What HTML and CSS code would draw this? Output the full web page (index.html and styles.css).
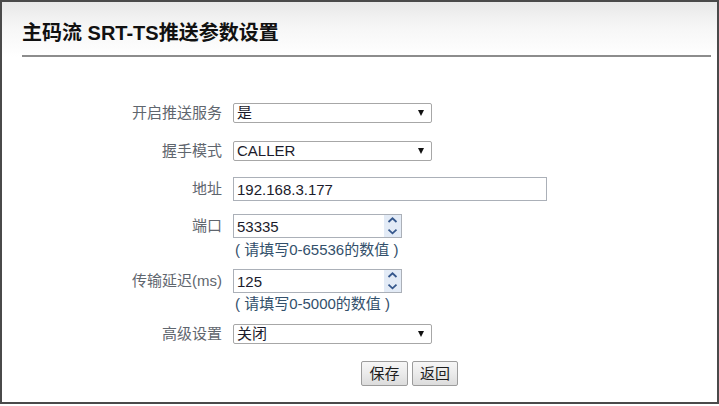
FILE: index.html
```html
<!DOCTYPE html>
<html lang="zh-CN">
<head>
<meta charset="utf-8">
<title>主码流 SRT-TS推送参数设置</title>
<link rel="stylesheet" href="styles.css">
</head>
<body>
<div class="frame">
  <div class="head">
    <h2 class="title">主码流 SRT-TS推送参数设置</h2>
  </div>
  <form class="form">
    <div class="row row-1">
      <label class="lbl lbl-sel">开启推送服务</label>
      <div class="field">
        <div class="sel-wrap">
          <select class="sel"><option>是</option><option>否</option></select>
          <i class="caret"></i>
        </div>
      </div>
    </div>
    <div class="row row-2">
      <label class="lbl lbl-sel">握手模式</label>
      <div class="field">
        <div class="sel-wrap">
          <select class="sel"><option>CALLER</option><option>LISTENER</option></select>
          <i class="caret"></i>
        </div>
      </div>
    </div>
    <div class="row row-3">
      <label class="lbl lbl-inp">地址</label>
      <div class="field">
        <input class="inp inp-wide" type="text" value="192.168.3.177">
      </div>
    </div>
    <div class="row row-4">
      <label class="lbl lbl-inp">端口</label>
      <div class="field">
        <div class="num">
          <input class="num-inp" type="text" value="53335">
          <span class="spin">
            <svg width="17" height="22" viewBox="0 0 17 22"><polyline points="4.5,7 8.5,3.3 12.5,7" fill="none" stroke="#35578c" stroke-width="1.8"/><polyline points="4.5,14.6 8.5,18.3 12.5,14.6" fill="none" stroke="#35578c" stroke-width="1.8"/></svg>
          </span>
        </div>
        <div class="hint hint-1">( 请填写0-65536的数值 )</div>
      </div>
    </div>
    <div class="row row-5">
      <label class="lbl lbl-inp">传输延迟(ms)</label>
      <div class="field">
        <div class="num">
          <input class="num-inp" type="text" value="125">
          <span class="spin">
            <svg width="17" height="22" viewBox="0 0 17 22"><polyline points="4.5,7 8.5,3.3 12.5,7" fill="none" stroke="#35578c" stroke-width="1.8"/><polyline points="4.5,14.6 8.5,18.3 12.5,14.6" fill="none" stroke="#35578c" stroke-width="1.8"/></svg>
          </span>
        </div>
        <div class="hint hint-2">( 请填写0-5000的数值 )</div>
      </div>
    </div>
    <div class="row row-6">
      <label class="lbl lbl-sel">高级设置</label>
      <div class="field">
        <div class="sel-wrap">
          <select class="sel"><option>关闭</option><option>开启</option></select>
          <i class="caret"></i>
        </div>
      </div>
    </div>
    <div class="actions">
      <button class="btn btn-save" type="button">保存</button>
      <button class="btn btn-back" type="button">返回</button>
    </div>
  </form>
</div>
</body>
</html>
```
FILE: styles.css
```css
html, body {
  margin: 0;
  padding: 0;
  background: #ffffff;
}

body {
  font-family: "Liberation Sans", "Noto Sans CJK SC", sans-serif;
  font-size: 15px;
  color: #222;
}

.frame {
  width: 719px;
  height: 404px;
  box-sizing: border-box;
  border: 2px solid #4a4a4a;
  background: #ffffff;
  overflow: hidden;
}

.head {
  background: linear-gradient(to bottom, #e8e8e8 0%, #f6f6f6 45%, #ffffff 100%);
  padding: 0 6px 0 20px;
}

.title {
  margin: 0;
  padding: 19px 0 10px 0;
  font-size: 20px;
  line-height: 24px;
  font-weight: bold;
  color: #111;
  border-bottom: 2px solid #8c8c8c;
}

.form {
  margin: 0;
  padding-top: 46px;
}

.row {
  display: flex;
  align-items: flex-start;
}

.row-2 { margin-top: 18px; }
.row-3 { margin-top: 16px; }
.row-4 { margin-top: 13px; }
.row-5 { margin-top: 9px; }
.row-6 { margin-top: 10px; }

.lbl {
  width: 220px;
  flex: none;
  text-align: right;
  color: #5f666e;
  font-size: 15px;
  white-space: nowrap;
}

.lbl-sel {
  height: 20px;
  line-height: 20px;
}

.lbl-inp {
  height: 24px;
  line-height: 24px;
}

.field {
  margin-left: 11px;
  display: flex;
  flex-direction: column;
}

.sel-wrap {
  position: relative;
  width: 199px;
  height: 20px;
}

.sel {
  -webkit-appearance: none;
  appearance: none;
  width: 199px;
  height: 20px;
  box-sizing: border-box;
  margin: 0;
  padding: 0 0 0 3px;
  border: 1px solid #a7a7a7;
  border-radius: 2px;
  background: #ffffff;
  font-family: "Liberation Sans", "Noto Sans CJK SC", sans-serif;
  font-size: 15px;
  line-height: 18px;
  color: #1b1b2b;
  outline: none;
}

.caret {
  position: absolute;
  right: 8px;
  top: 7px;
  width: 0;
  height: 0;
  border-left: 3.5px solid transparent;
  border-right: 3.5px solid transparent;
  border-top: 6px solid #111;
  pointer-events: none;
}

.inp {
  height: 24px;
  box-sizing: border-box;
  margin: 0;
  padding: 0 0 0 3px;
  border: 1px solid #abb0b8;
  background: #ffffff;
  font-family: "Liberation Sans", "Noto Sans CJK SC", sans-serif;
  font-size: 15px;
  color: #1b1b2b;
  outline: none;
}

.inp-wide {
  width: 314px;
}

.num {
  display: flex;
  width: 169px;
  height: 24px;
  box-sizing: border-box;
  border: 1px solid #abb0b8;
  background: #ffffff;
}

.num-inp {
  flex: 1;
  min-width: 0;
  height: 22px;
  box-sizing: border-box;
  margin: 0;
  padding: 0 0 0 3px;
  border: none;
  background: transparent;
  font-family: "Liberation Sans", "Noto Sans CJK SC", sans-serif;
  font-size: 15px;
  color: #1b1b2b;
  outline: none;
}

.spin {
  flex: none;
  width: 17px;
  height: 22px;
  background: #e3ebf6;
  display: flex;
}

.hint {
  padding-left: 2px;
  line-height: 20px;
  font-size: 15px;
  color: #33506b;
  white-space: nowrap;
}

.hint-1 { margin-top: 2px; }
.hint-2 { margin-top: 1px; }

.actions {
  display: flex;
  gap: 4px;
  margin-top: 17px;
  padding-left: 359px;
}

.btn {
  height: 25px;
  box-sizing: border-box;
  margin: 0;
  padding: 0 7px;
  border: 1px solid #9c9c9c;
  border-radius: 2px;
  background: linear-gradient(to bottom, #f6f6f6 0%, #ebebeb 50%, #dcdcdc 100%);
  font-family: "Liberation Sans", "Noto Sans CJK SC", sans-serif;
  font-size: 15px;
  line-height: 23px;
  color: #1d1d1d;
}

.btn-save { width: 47px; }
.btn-back { width: 46px; }
```
